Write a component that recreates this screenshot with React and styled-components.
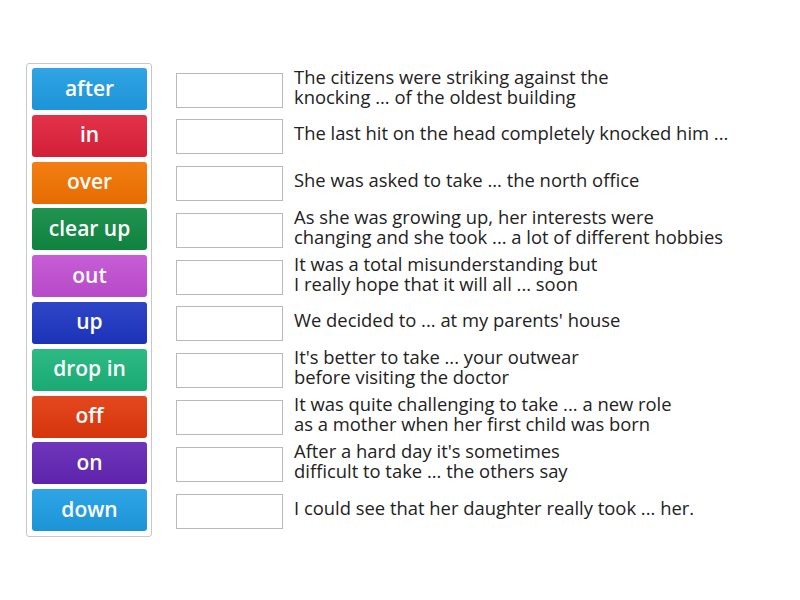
import React from 'react'
import styled, { createGlobalStyle } from 'styled-components'

const GlobalStyle = createGlobalStyle`
  body {
    margin: 0;
    background: #fff;
    font-family: "Open Sans", "Liberation Sans", sans-serif;
  }
`

const tiles = [
  { label: 'after', color: '#1f9de3' },
  { label: 'in', color: '#e0213b' },
  { label: 'over', color: '#f37300' },
  { label: 'clear up', color: '#0f8a42' },
  { label: 'out', color: '#c24fd3' },
  { label: 'up', color: '#1d36c3' },
  { label: 'drop in', color: '#1cb47a' },
  { label: 'off', color: '#e2380c' },
  { label: 'on', color: '#6325b5' },
  { label: 'down', color: '#1d9de3' },
]

const sentences = [
  ['The citizens were striking against the', 'knocking ... of the oldest building'],
  ['The last hit on the head completely knocked him ...'],
  ['She was asked to take ... the north office'],
  ['As she was growing up, her interests were', 'changing and she took ... a lot of different hobbies'],
  ['It was a total misunderstanding but', 'I really hope that it will all ... soon'],
  ["We decided to ... at my parents' house"],
  ["It's better to take ... your outwear", 'before visiting the doctor'],
  ['It was quite challenging to take ... a new role', 'as a mother when her first child was born'],
  ["After a hard day it's sometimes", 'difficult to take ... the others say'],
  ['I could see that her daughter really took ... her.'],
]

export default function App() {
  return (
    <>
      <GlobalStyle />
      <Page>
        <TilePanel>
          {tiles.map((t) => (
            <Tile key={t.label} $color={t.color}>{t.label}</Tile>
          ))}
        </TilePanel>
        <Rows>
          {sentences.map((lines, i) => (
            <Row key={i}>
              <Slot />
              <Sentence>
                {lines.map((l, j) => <div key={j}>{l}</div>)}
              </Sentence>
            </Row>
          ))}
        </Rows>
      </Page>
    </>
  )
}

const Page = styled.div`
  display: flex;
  align-items: flex-start;
  gap: 24px;
  padding: 63px 0 0 26px;
`

const TilePanel = styled.div`
  display: flex;
  flex-direction: column;
  gap: 4.8px;
  padding: 4px 4px 5px 5px;
  border: 1px solid #c8c8c8;
  border-radius: 3px;
`

const Tile = styled.div`
  width: 115px;
  height: 42px;
  border-radius: 3px;
  background: linear-gradient(to bottom, rgba(255,255,255,0.08), rgba(0,0,0,0.06)), ${(p) => p.$color};
  color: #fff;
  font-weight: 600;
  font-size: 21px;
  display: flex;
  align-items: center;
  justify-content: center;
  padding-bottom: 3px;
  box-sizing: border-box;
`

const Rows = styled.div`
  display: flex;
  flex-direction: column;
  gap: 4.8px;
  padding-top: 5px;
`

const Row = styled.div`
  height: 42px;
  display: flex;
  align-items: center;
  gap: 11px;
`

const Slot = styled.div`
  width: 107px;
  height: 35px;
  box-sizing: border-box;
  border: 1px solid #b9b9b9;
  background: #fff;
  flex-shrink: 0;
  margin-top: 2px;
`

const Sentence = styled.div`
  font-size: 18.4px;
  line-height: 20px;
  color: #222;
  padding-bottom: 5px;
`
